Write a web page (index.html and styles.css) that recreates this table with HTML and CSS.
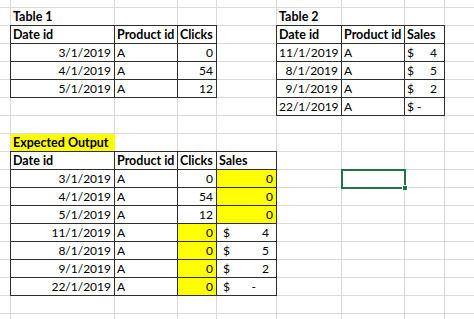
FILE: index.html
```html
<!DOCTYPE html>
<html lang="en">
<head>
<meta charset="utf-8">
<title>Sheet</title>
<link rel="stylesheet" href="styles.css">
</head>
<body>
<div class="sheet">
  <div class="label t1-title">Table 1</div>
  <div class="tbl t1">
    <div class="c b">Date id</div><div class="c b">Product id</div><div class="c b">Clicks</div>
    <div class="c r">3/1/2019</div><div class="c">A</div><div class="c r">0</div>
    <div class="c r">4/1/2019</div><div class="c">A</div><div class="c r">54</div>
    <div class="c r">5/1/2019</div><div class="c">A</div><div class="c r">12</div>
  </div>

  <div class="label t2-title">Table 2</div>
  <div class="tbl t2">
    <div class="c b">Date id</div><div class="c b">Product id</div><div class="c b">Sales</div>
    <div class="c r">11/1/2019</div><div class="c">A</div><div class="c acc acc-n"><span>$</span><span>4</span></div>
    <div class="c r">8/1/2019</div><div class="c">A</div><div class="c acc acc-n"><span>$</span><span>5</span></div>
    <div class="c r">9/1/2019</div><div class="c">A</div><div class="c acc acc-n"><span>$</span><span>2</span></div>
    <div class="c r">22/1/2019</div><div class="c">A</div><div class="c acc acc-n acc-zero"><span>$</span><span class="dash">-</span></div>
  </div>

  <div class="label hl eo-title">Expected Output</div>
  <div class="tbl t3">
    <div class="c b">Date id</div><div class="c b">Product id</div><div class="c b">Clicks</div><div class="c b">Sales</div>
    <div class="c r">3/1/2019</div><div class="c">A</div><div class="c r">0</div><div class="c r y">0</div>
    <div class="c r">4/1/2019</div><div class="c">A</div><div class="c r">54</div><div class="c r y">0</div>
    <div class="c r">5/1/2019</div><div class="c">A</div><div class="c r">12</div><div class="c r y">0</div>
    <div class="c r">11/1/2019</div><div class="c">A</div><div class="c r y">0</div><div class="c acc acc-w"><span>$</span><span>4</span></div>
    <div class="c r">8/1/2019</div><div class="c">A</div><div class="c r y">0</div><div class="c acc acc-w"><span>$</span><span>5</span></div>
    <div class="c r">9/1/2019</div><div class="c">A</div><div class="c r y">0</div><div class="c acc acc-w"><span>$</span><span>2</span></div>
    <div class="c r">22/1/2019</div><div class="c">A</div><div class="c r y">0</div><div class="c acc acc-w"><span>$</span><span class="dash-w">-</span></div>
  </div>

  <div class="sel"></div>
</div>
</body>
</html>
```

FILE: styles.css
```css
html, body {
  margin: 0;
  padding: 0;
  background: #ffffff;
  overflow: hidden;
}

body {
  font-family: Lato, "Liberation Sans", sans-serif;
  font-size: 12px;
  color: #000000;
}

.sheet {
  display: grid;
  grid-template-columns: 11px 104px 63px 39px 60px 65px 63px 40px 29px;
  grid-template-rows: 8px repeat(18, 18px);
  width: 474px;
  height: 319px;
  overflow: hidden;
  background-color: #ffffff;
  background-image:
    linear-gradient(#dadada, #dadada),
    linear-gradient(#dadada, #dadada),
    linear-gradient(#dadada, #dadada),
    linear-gradient(#dadada, #dadada),
    linear-gradient(#dadada, #dadada),
    linear-gradient(#dadada, #dadada),
    linear-gradient(#dadada, #dadada),
    linear-gradient(#dadada, #dadada),
    linear-gradient(to bottom, transparent 17px, #dadada 17px);
  background-size:
    1px 100%, 1px 100%, 1px 100%, 1px 100%,
    1px 100%, 1px 100%, 1px 100%, 1px 100%,
    100% 18px;
  background-position:
    10px 0, 114px 0, 177px 0, 216px 0,
    276px 0, 341px 0, 404px 0, 444px 0,
    0 8px;
  background-repeat:
    no-repeat, no-repeat, no-repeat, no-repeat,
    no-repeat, no-repeat, no-repeat, no-repeat,
    repeat-y;
}

.label {
  font-weight: 700;
  font-size: 12.5px;
  line-height: 17px;
  padding: 0 2px;
  white-space: nowrap;
}

.t1-title { grid-column: 2; grid-row: 2; }
.t2-title { grid-column: 6; grid-row: 2; }
.eo-title { grid-column: 2; grid-row: 9; }

.hl {
  background: #ffff00;
}

.tbl {
  display: grid;
  grid-auto-rows: 18px;
  align-self: start;
  justify-self: start;
  margin: -1px 0 0 -1px;
  border-top: 1px solid #2e2e2e;
  border-left: 1px solid #2e2e2e;
}

.t1 {
  grid-column: 2 / 5;
  grid-row: 3 / 7;
  grid-template-columns: 104px 63px 39px;
}

.t2 {
  grid-column: 6 / 9;
  grid-row: 3 / 8;
  grid-template-columns: 65px 63px 40px;
}

.t3 {
  grid-column: 2 / 6;
  grid-row: 10 / 18;
  grid-template-columns: 104px 63px 39px 60px;
}

.c {
  border-right: 1px solid #2e2e2e;
  border-bottom: 1px solid #2e2e2e;
  background: #ffffff;
  line-height: 17px;
  padding: 0 3px 0 2px;
  white-space: nowrap;
  overflow: hidden;
}

.b { font-weight: 700; font-size: 12.5px; }
.r { text-align: right; }
.y { background: #ffff00; }

.acc {
  display: flex;
  justify-content: space-between;
}

.acc-n { padding: 0 7px 0 2px; }
.acc-w { padding: 0 7px 0 6px; }

.acc-zero { justify-content: flex-start; gap: 3px; }
.dash-w { padding-right: 13px; }

.sel {
  grid-column: 7;
  grid-row: 11;
  margin: -1px;
  border: 2px solid #217346;
  position: relative;
}

.sel::after {
  content: "";
  position: absolute;
  right: -4px;
  bottom: -4px;
  width: 4px;
  height: 4px;
  background: #217346;
  border: 1px solid #ffffff;
}
```
